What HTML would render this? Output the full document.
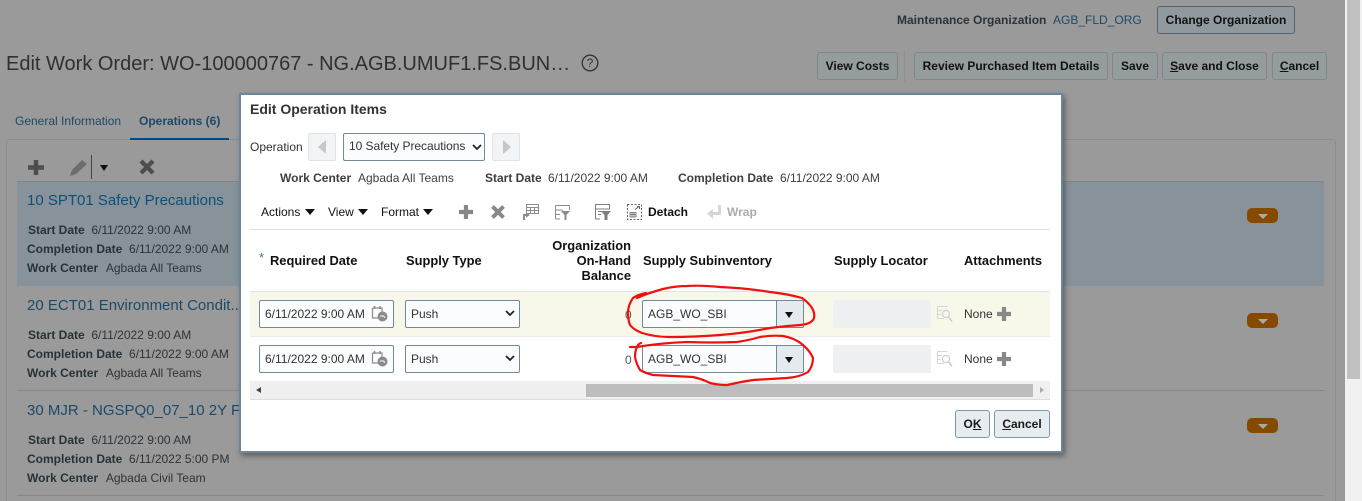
<!DOCTYPE html>
<html><head><meta charset="utf-8"><style>
html,body{margin:0;padding:0;width:1362px;height:501px;overflow:hidden;background:#9a9a9a}
body{position:relative;font-family:"Liberation Sans",sans-serif;font-size:12px;color:#2f2f2f}
.t{position:absolute;white-space:nowrap;line-height:16px}
.b{font-weight:bold}
.box{position:absolute;box-sizing:border-box}
.btn{position:absolute;box-sizing:border-box;border:1px solid #7d878c;border-radius:3px;background:#949c9e;color:#111;font-weight:bold;text-align:center;line-height:27px;white-space:nowrap}
.dbtn{position:absolute;box-sizing:border-box;border:1px solid #7c98ab;border-radius:3px;background:#e6ecef;color:#1a1a1a;font-weight:bold;text-align:center;line-height:27px}
.inp{position:absolute;box-sizing:border-box;border:1px solid #71899a;border-radius:2px;background:#fbfcfe;line-height:27px;padding-left:5px;color:#333;white-space:nowrap}
.chip{position:absolute;left:1247px;width:31px;height:15px;background:#854a00;border-radius:5px}
.chip:after{content:"";position:absolute;left:11px;top:6px;border-left:5px solid transparent;border-right:5px solid transparent;border-top:5px solid #a9a9a9}
.tri{position:absolute;width:0;height:0;border-left:5px solid transparent;border-right:5px solid transparent;border-top:6px solid #111}
.l{color:#263238;font-weight:bold}
.v{color:#2c3338}
.wc{margin-left:1px}
.ttl{font-size:15px;line-height:18px}
.hd{font-weight:bold;font-size:12.9px;color:#111}
svg{position:absolute;overflow:visible}
u{text-decoration:underline}
</style></head><body>

<!-- scrollbar -->
<div class="box" style="left:1345px;top:0;width:17px;height:501px;background:#f1f1f1"></div>
<div class="box" style="left:1347px;top:0;width:13px;height:379px;background:#c1c1c1"></div>

<!-- page header -->
<div class="t b" style="left:897px;top:12px;color:#2c3338">Maintenance Organization</div>
<div class="t" style="left:1053px;top:12px;color:#1b4a68">AGB_FLD_ORG</div>
<div class="btn" style="left:1157px;top:6px;width:138px;height:28px;background:#8f999e;border-color:#56666f">Change Organization</div>
<div class="t" style="left:6px;top:52px;font-size:20px;line-height:24px;color:#303030">Edit Work Order: WO-100000767 - NG.AGB.UMUF1.FS.BUN…</div>
<svg style="left:581px;top:54px" width="18" height="18"><circle cx="9" cy="9" r="7.8" fill="none" stroke="#333" stroke-width="1.3"/><text x="9" y="13" font-size="12" text-anchor="middle" fill="#333" font-family="Liberation Sans">?</text></svg>

<div class="btn" style="left:817px;top:52px;width:81px;height:28px">View Costs</div>
<div class="box" style="left:904px;top:50px;width:1px;height:32px;background:#8b9194"></div>
<div class="btn" style="left:914px;top:52px;width:194px;height:28px">Review Purchased Item Details</div>
<div class="btn" style="left:1112px;top:52px;width:46px;height:28px">Save</div>
<div class="btn" style="left:1162px;top:52px;width:105px;height:28px"><u>S</u>ave and Close</div>
<div class="btn" style="left:1272px;top:52px;width:55px;height:28px"><u>C</u>ancel</div>

<!-- tabs -->
<div class="t" style="left:15px;top:113px;color:#1b4a68">General Information</div>
<div class="t b" style="left:139px;top:113px;color:#1b4a68">Operations (6)</div>

<!-- panel -->
<div class="box" style="left:6px;top:139px;width:1330px;height:380px;border:1px solid #858f94;border-radius:3px"></div>
<div class="box" style="left:130px;top:138px;width:99px;height:2px;background:#004a82"></div>
<svg style="left:28px;top:160px" width="16" height="15"><path d="M0 7.5H16M8 0V15" stroke="#4d4d4d" stroke-width="4.5" fill="none"/></svg>
<svg style="left:69px;top:158px" width="20" height="20"><path d="M1 18L3 12L13 2L18 6L7 16Z" fill="#6d6d6d"/></svg>
<div class="box" style="left:91px;top:155px;width:1px;height:24px;background:#444"></div>
<div class="tri" style="left:100px;top:165px;border-left-width:4.5px;border-right-width:4.5px"></div>
<svg style="left:139px;top:159px" width="16" height="16"><path d="M2 2L14 14M14 2L2 14" stroke="#4d4d4d" stroke-width="4.2" fill="none"/></svg>

<div class="box" style="left:17px;top:181px;width:1307px;height:105px;background:#87929a;border-top:1px solid #7b868d"></div>
<div class="box" style="left:17px;top:390px;width:1307px;height:1px;background:#878787"></div>
<div class="box" style="left:17px;top:495px;width:1307px;height:1px;background:#878787"></div>

<div class="t ttl" style="left:27px;top:192px;color:#0e5078">10 SPT01 Safety Precautions</div>
<div class="t" style="left:28px;top:222px"><span class="l">Start Date</span>&nbsp; <span class="v">6/11/2022 9:00 AM</span></div>
<div class="t" style="left:27px;top:241px"><span class="l">Completion Date</span>&nbsp; <span class="v">6/11/2022 9:00 AM</span></div>
<div class="t" style="left:27px;top:260px"><span class="l">Work Center</span>&nbsp; <span class="v wc">Agbada All Teams</span></div>

<div class="t ttl" style="left:27px;top:297px;color:#1b4a68">20 ECT01 Environment Condit...</div>
<div class="t" style="left:28px;top:327px"><span class="l">Start Date</span>&nbsp; <span class="v">6/11/2022 9:00 AM</span></div>
<div class="t" style="left:27px;top:346px"><span class="l">Completion Date</span>&nbsp; <span class="v">6/11/2022 9:00 AM</span></div>
<div class="t" style="left:27px;top:365px"><span class="l">Work Center</span>&nbsp; <span class="v wc">Agbada All Teams</span></div>

<div class="t ttl" style="left:27px;top:402px;color:#1b4a68">30 MJR - NGSPQ0_07_10 2Y F</div>
<div class="t" style="left:28px;top:432px"><span class="l">Start Date</span>&nbsp; <span class="v">6/11/2022 9:00 AM</span></div>
<div class="t" style="left:27px;top:451px"><span class="l">Completion Date</span>&nbsp; <span class="v">6/11/2022 5:00 PM</span></div>
<div class="t" style="left:27px;top:470px"><span class="l">Work Center</span>&nbsp; <span class="v wc">Agbada Civil Team</span></div>

<div class="chip" style="top:208px"></div>
<div class="chip" style="top:313px"></div>
<div class="chip" style="top:418px"></div>

<!-- dialog -->
<div class="box" style="left:239px;top:93px;width:824px;height:360px;background:#fff;border:2px solid #6a8698;box-shadow:2px 3px 5px rgba(50,50,50,.55)"></div>
<div class="t b" style="left:250px;top:101px;font-size:14px;color:#333">Edit Operation Items</div>
<div class="t" style="left:250px;top:139px;color:#333">Operation</div>

<div class="box" style="left:308px;top:133px;width:28px;height:28px;background:#f2f4f5;border:1px solid #dfe4e7;border-radius:2px"></div>
<div class="box" style="left:318px;top:140px;width:0;height:0;border-top:7px solid transparent;border-bottom:7px solid transparent;border-right:8px solid #c4c8cb"></div>
<div class="inp" style="left:343px;top:133px;width:142px;height:28px;line-height:25px;letter-spacing:-.05px">10 Safety Precautions</div>
<svg style="left:472px;top:144px" width="10" height="7"><path d="M1 1L5 5L9 1" fill="none" stroke="#222" stroke-width="1.8"/></svg>
<div class="box" style="left:492px;top:133px;width:28px;height:28px;background:#f2f4f5;border:1px solid #dfe4e7;border-radius:2px"></div>
<div class="box" style="left:503px;top:140px;width:0;height:0;border-top:7px solid transparent;border-bottom:7px solid transparent;border-left:8px solid #c4c8cb"></div>

<div class="t b" style="left:280px;top:170px;color:#3a3f44">Work Center</div>
<div class="t" style="left:358px;top:170px;color:#3a3f44">Agbada All Teams</div>
<div class="t b" style="left:485px;top:170px;color:#3a3f44">Start Date</div>
<div class="t" style="left:548px;top:170px;color:#3a3f44">6/11/2022 9:00 AM</div>
<div class="t b" style="left:678px;top:170px;color:#3a3f44">Completion Date</div>
<div class="t" style="left:780px;top:170px;color:#3a3f44">6/11/2022 9:00 AM</div>

<!-- toolbar -->
<div class="t" style="left:261px;top:204px;color:#111">Actions</div>
<div class="tri" style="left:305px;top:209px"></div>
<div class="t" style="left:328px;top:204px;color:#111">View</div>
<div class="tri" style="left:358px;top:209px"></div>
<div class="t" style="left:381px;top:204px;color:#111">Format</div>
<div class="tri" style="left:423px;top:209px"></div>
<svg style="left:459px;top:205px" width="14" height="14"><path d="M0 7H14M7 0V14" stroke="#888" stroke-width="4.2" fill="none"/></svg>
<svg style="left:491px;top:205px" width="14" height="14"><path d="M1.5 1.5L12.5 12.5M12.5 1.5L1.5 12.5" stroke="#888" stroke-width="4" fill="none"/></svg>
<svg style="left:522px;top:204px" width="17" height="17"><path d="M4.5 .5H16.5V9.5H4.5ZM4.5 3.5H16.5M8.5 3.5V9.5M12.5 3.5V9.5M4.5 6.5H16.5" fill="none" stroke="#8b8b8b"/><path d="M2 16V11H6" fill="none" stroke="#8b8b8b" stroke-width="2"/><path d="M4 8.5L8 11L4 13.5Z" fill="#8b8b8b"/></svg>
<svg style="left:555px;top:204px" width="16" height="16"><path d="M.5 1.5H14.5M.5 6H8M.5 10.5H5M.5 15H5M.5 1.5V15M14.5 1.5V6" fill="none" stroke="#8b8b8b"/><path d="M6 7H15L11.5 11V16H9.5V11Z" fill="#8b8b8b"/></svg>
<svg style="left:595px;top:204px" width="16" height="16"><path d="M.5 .5H14.5V5H.5ZM.5 5V15H5M3 7.5H7M3 10.5H6" fill="none" stroke="#7d7d7d"/><path d="M6 7H16L12.5 11V16H9.5V11Z" fill="#7d7d7d"/></svg>
<svg style="left:627px;top:204px" width="15" height="16"><rect x=".5" y=".5" width="14" height="15" fill="none" stroke="#666" stroke-dasharray="2 1.5"/><path d="M8 5.5L12 2.5M10 2.5H12.5V5" fill="none" stroke="#666"/><path d="M3 8.5H9V13H3ZM3 10.5H9M5 8.5V13M7 8.5V13" fill="none" stroke="#666" stroke-width=".8"/></svg>
<div class="t b" style="left:648px;top:204px;color:#111">Detach</div>
<svg style="left:707px;top:205px" width="15" height="15"><path d="M11 0H14V10H6V14L0 8.5L6 4V7H11Z" fill="#d4d6d7"/></svg>
<div class="t b" style="left:727px;top:204px;color:#a9abad">Wrap</div>
<div class="box" style="left:250px;top:229px;width:800px;height:1px;background:#d6dfe6"></div>

<!-- table header -->
<div class="t" style="left:259px;top:250px;color:#2a7ab8;font-size:13px">*</div>
<div class="t hd" style="left:270px;top:253px">Required Date</div>
<div class="t hd" style="left:406px;top:253px">Supply Type</div>
<div class="t hd" style="left:531px;top:238px;width:100px;text-align:right;line-height:15px;white-space:normal">Organization On-Hand Balance</div>
<div class="t hd" style="left:643px;top:253px">Supply Subinventory</div>
<div class="t hd" style="left:834px;top:253px">Supply Locator</div>
<div class="t hd" style="left:964px;top:253px">Attachments</div>

<!-- rows -->
<div class="box" style="left:250px;top:291px;width:800px;height:46px;background:#f7f8ea;border-top:1px solid #dfe4e7;border-bottom:1px solid #e9ecee"></div>

<div class="inp" style="left:259px;top:300px;width:135px;height:28px">6/11/2022 9:00 AM</div>
<div class="inp" style="left:259px;top:345px;width:135px;height:28px">6/11/2022 9:00 AM</div>
<svg style="left:371px;top:305px" width="17" height="17"><path d="M1.5 3V13H7M1.5 3H11V7" fill="none" stroke="#8b8b8b" stroke-width="1.2"/><path d="M3.5 1V4M9 1V4" stroke="#8b8b8b" stroke-width="1.5"/><circle cx="11.5" cy="11.5" r="5" fill="#8b8b8b"/><path d="M9 11H12.5L14 12.5" stroke="#fff" fill="none"/></svg>
<svg style="left:371px;top:350px" width="17" height="17"><path d="M1.5 3V13H7M1.5 3H11V7" fill="none" stroke="#8b8b8b" stroke-width="1.2"/><path d="M3.5 1V4M9 1V4" stroke="#8b8b8b" stroke-width="1.5"/><circle cx="11.5" cy="11.5" r="5" fill="#8b8b8b"/><path d="M9 11H12.5L14 12.5" stroke="#fff" fill="none"/></svg>

<div class="inp" style="left:405px;top:300px;width:115px;height:28px">Push</div>
<div class="inp" style="left:405px;top:345px;width:115px;height:28px">Push</div>
<svg style="left:505px;top:310px" width="10" height="7"><path d="M1 1L5 5L9 1" fill="none" stroke="#222" stroke-width="1.8"/></svg>
<svg style="left:505px;top:355px" width="10" height="7"><path d="M1 1L5 5L9 1" fill="none" stroke="#222" stroke-width="1.8"/></svg>

<div class="t" style="left:625px;top:307px;color:#555">0</div>
<div class="t" style="left:625px;top:352px;color:#555">0</div>

<div class="inp" style="left:642px;top:300px;width:162px;height:28px">AGB_WO_SBI</div>
<div class="inp" style="left:642px;top:345px;width:162px;height:28px">AGB_WO_SBI</div>
<div class="box" style="left:776px;top:300px;width:28px;height:28px;background:#e4eaed;border:1px solid #71899a;border-radius:0 2px 2px 0"></div>
<div class="box" style="left:776px;top:345px;width:28px;height:28px;background:#e4eaed;border:1px solid #71899a;border-radius:0 2px 2px 0"></div>
<div class="tri" style="left:785px;top:312px;border-left-width:4.5px;border-right-width:4.5px"></div>
<div class="tri" style="left:785px;top:357px;border-left-width:4.5px;border-right-width:4.5px"></div>

<div class="box" style="left:833px;top:300px;width:98px;height:28px;background:#eff0f1;border-radius:2px"></div>
<div class="box" style="left:833px;top:345px;width:98px;height:28px;background:#eff0f1;border-radius:2px"></div>
<svg style="left:937px;top:306px" width="16" height="17"><path d="M.5 .5H10.5M.5 4.5H5M.5 8.5H4M.5 12.5H7M.5 .5V12.5" fill="none" stroke="#d6d8d8"/><circle cx="9" cy="8" r="3.6" fill="none" stroke="#d0d2d2" stroke-width="1.3"/><path d="M11.5 11L15 15.5" stroke="#c4c6c6" stroke-width="1.4"/></svg>
<svg style="left:937px;top:351px" width="16" height="17"><path d="M.5 .5H10.5M.5 4.5H5M.5 8.5H4M.5 12.5H7M.5 .5V12.5" fill="none" stroke="#d6d8d8"/><circle cx="9" cy="8" r="3.6" fill="none" stroke="#d0d2d2" stroke-width="1.3"/><path d="M11.5 11L15 15.5" stroke="#c4c6c6" stroke-width="1.4"/></svg>

<div class="t" style="left:964px;top:306px;color:#333">None</div>
<div class="t" style="left:964px;top:351px;color:#333">None</div>
<svg style="left:997px;top:307px" width="14" height="14"><path d="M0 7H14M7 0V14" stroke="#888" stroke-width="4.2" fill="none"/></svg>
<svg style="left:997px;top:352px" width="14" height="14"><path d="M0 7H14M7 0V14" stroke="#888" stroke-width="4.2" fill="none"/></svg>

<!-- table scrollbar -->
<div class="box" style="left:250px;top:381px;width:800px;height:19px;background:#f0f0f0;border-bottom:1px solid #d6dfe6"></div>
<div class="box" style="left:586px;top:384px;width:447px;height:13px;background:#bdbdbd"></div>
<div class="box" style="left:256px;top:387px;width:0;height:0;border-top:3.5px solid transparent;border-bottom:3.5px solid transparent;border-right:5px solid #444"></div>
<div class="box" style="left:1040px;top:387px;width:0;height:0;border-top:3.5px solid transparent;border-bottom:3.5px solid transparent;border-left:4px solid #aaa"></div>

<div class="dbtn" style="left:955px;top:410px;width:35px;height:28px">O<u>K</u></div>
<div class="dbtn" style="left:994px;top:410px;width:56px;height:28px"><u>C</u>ancel</div>

<!-- red annotations -->
<svg style="left:0;top:0" width="1362" height="501"><g fill="none" stroke="#f01010" stroke-width="2.2" stroke-linecap="round" stroke-linejoin="round">
<path d="M646 293Q637 295 633 298Q628 305 628 313Q628 320 630 325Q634 330 642 333Q655 337 670 337Q695 337 720 335Q745 333 770 328Q785 326 800 325Q812 324 814 318Q815 313 812 308Q808 302 802 298Q788 294 770 292Q745 288 720 287Q700 285 687 286Q675 286 663 289Q648 293 637 298"/>
<path d="M630 347Q634 347 637 347Q660 343 687 342Q712 343 737 342Q750 340 760 337Q772 335 783 336Q795 338 803 345Q810 351 813 358Q813 366 808 372Q800 377 787 378Q770 379 753 380Q740 382 727 385Q718 385 710 383Q702 379 693 377Q672 376 653 375Q645 373 640 370Q636 363 635 357Q635 351 637 347Q638 344 641 343"/>
</g></svg>
</body></html>
